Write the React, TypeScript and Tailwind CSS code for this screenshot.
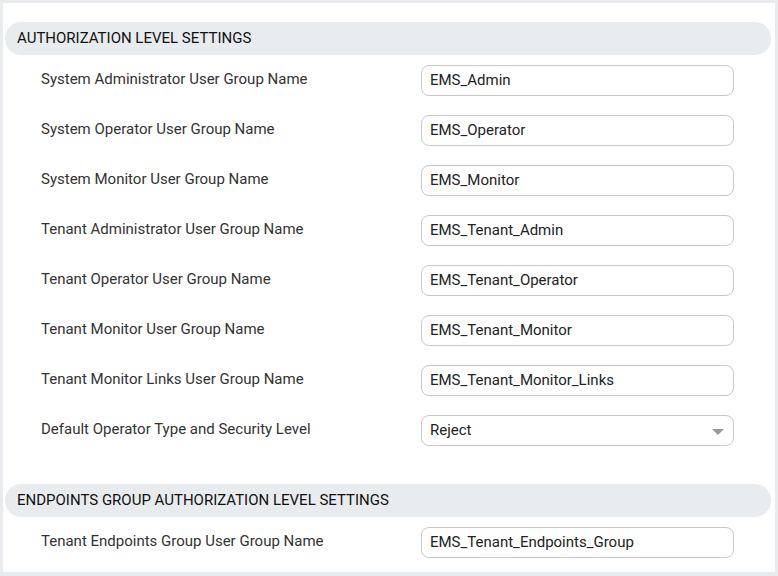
import React from "react";

const rows: [string, string][] = [
  ["System Administrator User Group Name", "EMS_Admin"],
  ["System Operator User Group Name", "EMS_Operator"],
  ["System Monitor User Group Name", "EMS_Monitor"],
  ["Tenant Administrator User Group Name", "EMS_Tenant_Admin"],
  ["Tenant Operator User Group Name", "EMS_Tenant_Operator"],
  ["Tenant Monitor User Group Name", "EMS_Tenant_Monitor"],
  ["Tenant Monitor Links User Group Name", "EMS_Tenant_Monitor_Links"],
];

function Row({ label, value, select }: { label: string; value: string; select?: boolean }) {
  return (
    <div className="flex items-center h-[31px] mb-[19px]">
      <div className="w-[416px] pl-[36px] text-[15px] text-[#333] leading-none -mt-[2px]">{label}</div>
      <div className="relative w-[313px] h-[31px] border border-[#c8c8c8] rounded-[8px] bg-white flex items-center pl-[8px] text-[15px] text-[#222]">
        {value}
        {select && (
          <div className="absolute right-[9px] top-[13px] w-0 h-0 border-l-[6px] border-r-[6px] border-t-[6px] border-l-transparent border-r-transparent border-t-[#999]" />
        )}
      </div>
    </div>
  );
}

export default function App() {
  return (
    <div className="w-[778px] h-[576px] bg-[#e9ecef] p-[3px]" style={{ fontFamily: "Roboto, sans-serif" }}>
      <div className="bg-white w-[772px] h-[569px] pt-[19px] px-[2px]">
        <div className="w-[766px] h-[33px] bg-[#e9ecef] rounded-[16px] flex items-center pl-[12px] text-[15px] text-[#111]">
          AUTHORIZATION LEVEL SETTINGS
        </div>
        <div className="mt-[10px]">
          {rows.map(([l, v]) => (
            <Row key={l} label={l} value={v} />
          ))}
          <Row label="Default Operator Type and Security Level" value="Reject" select />
        </div>
        <div className="mt-[38px] w-[766px] h-[33px] bg-[#e9ecef] rounded-[16px] flex items-center pl-[12px] text-[15px] text-[#111]">
          ENDPOINTS GROUP AUTHORIZATION LEVEL SETTINGS
        </div>
        <div className="mt-[10px]">
          <Row label="Tenant Endpoints Group User Group Name" value="EMS_Tenant_Endpoints_Group" />
        </div>
      </div>
    </div>
  );
}
